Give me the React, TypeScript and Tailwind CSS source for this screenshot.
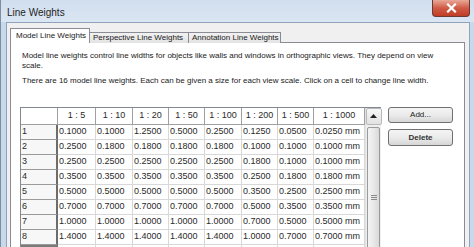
import React from "react";

const scales = ["1 : 5", "1 : 10", "1 : 20", "1 : 50", "1 : 100", "1 : 200", "1 : 500", "1 : 1000"];
const rows: string[][] = [
  ["0.1000", "0.1000", "1.2500", "0.5000", "0.2500", "0.1250", "0.0500", "0.0250 mm"],
  ["0.2500", "0.1800", "0.1800", "0.1800", "0.1800", "0.1000", "0.1000", "0.1000 mm"],
  ["0.2500", "0.2500", "0.2500", "0.2500", "0.2500", "0.1800", "0.1000", "0.1000 mm"],
  ["0.3500", "0.3500", "0.3500", "0.3500", "0.3500", "0.2500", "0.1800", "0.1800 mm"],
  ["0.5000", "0.5000", "0.5000", "0.5000", "0.5000", "0.3500", "0.2500", "0.2500 mm"],
  ["0.7000", "0.7000", "0.7000", "0.7000", "0.7000", "0.5000", "0.3500", "0.3500 mm"],
  ["1.0000", "1.0000", "1.0000", "1.0000", "1.0000", "0.7000", "0.5000", "0.5000 mm"],
  ["1.4000", "1.4000", "1.4000", "1.4000", "1.4000", "1.0000", "0.7000", "0.7000 mm"],
];

export default function App() {
  return (
    <div className="w-[474px] h-[247px] overflow-hidden flex flex-col bg-[#c9d9ec] border-l border-[#7d8ea3] font-['Liberation_Sans',Arial,sans-serif] text-[#1a1a1a]">
      {/* Title bar */}
      <div className="h-[22px] shrink-0 flex items-start bg-gradient-to-b from-[#d0deee] to-[#dbe6f3]">
        <div className="pl-[6px] pt-[7px] text-[10px] leading-[12px] text-[#1e1e1e]">Line Weights</div>
        <div className="ml-auto mr-[4px] w-[38px] h-[17px] rounded-b-[4px] border border-t-0 border-[#6b3a33] bg-gradient-to-b from-[#e8a898] via-[#cf5a45] to-[#c13d25] flex items-center justify-center">
          <svg width="11" height="10" viewBox="0 0 11 10">
            <path d="M2 1.5 L9 8.5 M9 1.5 L2 8.5" stroke="#ffffff" strokeWidth="2.2" strokeLinecap="square" />
          </svg>
        </div>
      </div>

      {/* Body */}
      <div className="flex-1 flex pl-[5px] pr-[4px]">
        <div className="flex-1 bg-[#f0f0f0] border-l border-t border-r border-[#8fa3bc] pl-[3px] pr-[4px] pt-[5px] flex flex-col">
          {/* Tabs */}
          <div className="flex items-end h-[15px] relative z-10 -mb-px">
            <div className="w-[80px] h-[15px] bg-white border border-b-0 border-[#898c95] text-[8px] leading-[12px] pl-[5px] pt-[1px] text-[#1a1a1a] whitespace-nowrap">
              Model Line Weights
            </div>
            <div className="w-[99px] h-[11px] bg-gradient-to-b from-[#f2f2f2] to-[#e3e3e3] border border-l-0 border-b-0 border-[#898c95] text-[8px] leading-[10px] pl-[3px] whitespace-nowrap">
              Perspective Line Weights
            </div>
            <div className="w-[92px] h-[11px] bg-gradient-to-b from-[#f2f2f2] to-[#e3e3e3] border border-l-0 border-b-0 border-[#898c95] text-[8px] leading-[10px] pl-[3px] whitespace-nowrap">
              Annotation Line Weights
            </div>
          </div>

          {/* Panel */}
          <div className="flex-1 bg-white border border-b-0 border-[#898c95] pl-[11px] pt-[8px]">
            <p className="text-[8px] leading-[10px] whitespace-nowrap">
              Model line weights control line widths for objects like walls and windows in orthographic views. They depend on view
              <br />
              scale.
            </p>
            <p className="mt-[5px] text-[8px] leading-[10px] whitespace-nowrap">
              There are 16 model line weights. Each can be given a size for each view scale. Click on a cell to change line width.
            </p>

            <div className="mt-[21px] -ml-[2px] flex items-start">
              <div className="flex items-start border-l border-t border-[#828790] bg-white">
                <div className="grid content-start grid-cols-[37px_38px_37px_36px_36px_37px_36px_36px_51px] text-[9px] text-[#2a2a2a]">
                  <div className="h-[17px] border-r border-b border-[#a0a0a0] bg-white" />
                  {scales.map((s) => (
                    <div key={s} className="h-[17px] border-r border-b border-[#a0a0a0] bg-white flex items-center justify-center whitespace-nowrap">
                      {s}
                    </div>
                  ))}
                  {rows.map((r, i) => (
                    <React.Fragment key={i}>
                      <div className="h-[15px] border-r-2 border-b border-r-[#6c6c6c] border-b-[#9a9a9a] bg-[#f7f7f7] pl-[1px] flex items-center">
                        {i + 1}
                      </div>
                      {r.map((v, j) => (
                        <div key={j} className="h-[15px] border-r border-b border-[#d8d8d8] pl-[1px] flex items-center whitespace-nowrap">
                          {v}
                        </div>
                      ))}
                    </React.Fragment>
                  ))}
                  <div className="h-[15px] border-t-2 border-r-2 border-t-[#7a7a7a] border-r-[#6c6c6c] bg-[#e6e6e6]" />
                  {scales.map((s) => (
                    <div key={"e" + s} className="h-[15px] border-r border-[#d8d8d8]" />
                  ))}
                </div>
                {/* Scrollbar */}
                <div className="w-[16px] h-[160px] bg-[#efefef] border-l border-[#e3e3e3] flex flex-col items-center">
                  <div className="w-[16px] h-[17px] border border-[#b9b9b9] rounded-[2px] bg-gradient-to-b from-[#f7f7f7] to-[#e2e2e2] flex items-center justify-center">
                    <svg width="7" height="4" viewBox="0 0 7 4">
                      <path d="M0 4 L3.5 0 L7 4 Z" fill="#222" />
                    </svg>
                  </div>
                  <div className="mt-[2px] w-[13px] h-[144px] border border-[#9a9a9a] rounded-[2px] bg-gradient-to-r from-[#f4f4f4] via-[#e9e9e9] to-[#d9d9d9] flex items-center justify-center">
                    <svg width="6" height="5" viewBox="0 0 6 5">
                      <path d="M0 0.5 H6 M0 2.5 H6 M0 4.5 H6" stroke="#8a8a8a" strokeWidth="1" />
                    </svg>
                  </div>
                </div>
              </div>

              <div className="ml-[7px] w-[65px] flex flex-col gap-[6px]">
                <div className="h-[16px] rounded-[3px] border border-[#707070] bg-gradient-to-b from-[#f4f4f4] via-[#ebebeb] to-[#d6d6d6] flex items-center justify-center text-[8px] text-[#1a1a1a]">
                  Add...
                </div>
                <div className="h-[17px] rounded-[3px] border border-[#707070] bg-gradient-to-b from-[#f4f4f4] via-[#ebebeb] to-[#d6d6d6] flex items-center justify-center text-[8px] font-bold text-[#333]">
                  Delete
                </div>
              </div>
            </div>
          </div>
        </div>
      </div>
    </div>
  );
}
